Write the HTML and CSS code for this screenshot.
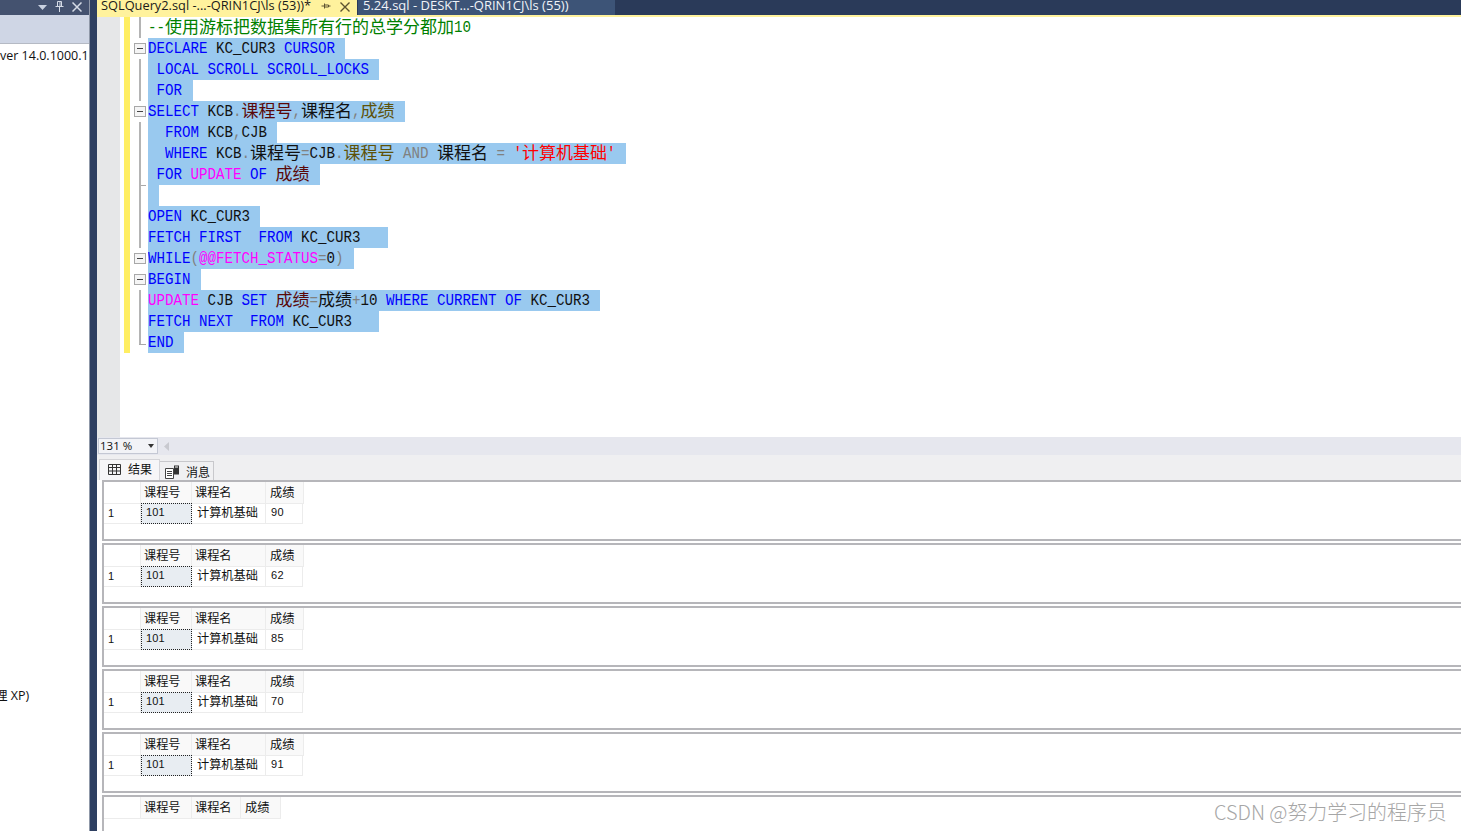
FILE: index.html
```html
<!DOCTYPE html>
<html lang="zh">
<head>
<meta charset="utf-8">
<title>SQLQuery2.sql</title>
<link rel="stylesheet" href="styles.css">
</head>
<body>
<div class="app">
  <aside class="side">
    <div class="side-bar">
      <svg class="ic-tri" width="9" height="5" viewBox="0 0 9 5"><path d="M0 0h9L4.500 5z" fill="#c9d1e0"/></svg>
      <svg class="ic-pin" width="9" height="11" viewBox="0 0 9 11"><path d="M2.500 .5h4v5h-4zM5 1v4.500M.5 5.500h8M4.500 6v5" fill="none" stroke="#d5dbe6"/></svg>
      <svg class="ic-x" width="10" height="10" viewBox="0 0 10 10"><path d="M.5.500l9 9M9.500.5l-9 9" stroke="#d5dbe6" stroke-width="1.500"/></svg>
    </div>
    <div class="side-head"></div>
    <div class="side-body">
      <div class="side-ver">ver 14.0.1000.169</div>
      <div class="side-xp">理 XP)</div>
    </div>
  </aside>
  <div class="split"></div>
  <main class="main">
    <div class="tabs">
      <div class="tab tab-on">
        <span class="tab-name">SQLQuery2.sql -...-QRIN1CJ\ls (53))*</span>
        <svg class="tab-pin" width="10" height="9" viewBox="0 0 10 9"><path d="M3.500 1.500v5M3.500 3h4v2h-4M7.500 4h2M.5 4h3" fill="none" stroke="#5c5330"/></svg>
        <svg class="tab-x" width="10" height="10" viewBox="0 0 10 10"><path d="M.5.500l9 9M9.500.5l-9 9" stroke="#5c5330" stroke-width="1.400"/></svg>
      </div>
      <div class="tab tab-off"><span class="tab-name">5.24.sql - DESKT...-QRIN1CJ\ls (55))</span></div>
    </div>
    <div class="tab-rule"></div>
    <section class="editor">
      <div class="row"><div class="gut"><i class="fold"></i></div><div class="code plain cm"><span class="t">--</span><span class="c">使用游标把数据集所有行的总学分都加</span><span class="t">10</span></div></div>
      <div class="row"><div class="gut"><i class="box"></i></div><div class="code"><span class="t kw">DECLARE</span> <span class="t">KC_CUR3</span> <span class="t kw">CURSOR</span></div></div>
      <div class="row"><div class="gut"><i class="fold"></i></div><div class="code"> <span class="t kw">LOCAL</span> <span class="t kw">SCROLL</span> <span class="t kw">SCROLL_LOCKS</span></div></div>
      <div class="row"><div class="gut"><i class="fold"></i></div><div class="code"> <span class="t kw">FOR</span></div></div>
      <div class="row"><div class="gut"><i class="box"></i></div><div class="code"><span class="t kw">SELECT</span> <span class="t">KCB</span><span class="t op">.</span><span class="c dr">课程号</span><span class="t op">,</span><span class="c">课程名</span><span class="t op">,</span><span class="c ol">成绩</span></div></div>
      <div class="row"><div class="gut"><i class="fold"></i></div><div class="code">  <span class="t kw">FROM</span> <span class="t">KCB</span><span class="t op">,</span><span class="t">CJB</span></div></div>
      <div class="row"><div class="gut"><i class="fold"></i></div><div class="code">  <span class="t kw">WHERE</span> <span class="t">KCB</span><span class="t op">.</span><span class="c">课程号</span><span class="t op">=</span><span class="t">CJB</span><span class="t op">.</span><span class="c ol">课程号</span> <span class="t op">AND</span> <span class="c">课程名</span> <span class="t op">=</span> <span class="t str">'</span><span class="c str">计算机基础</span><span class="t str">'</span></div></div>
      <div class="row"><div class="gut"><i class="fold fold-end"></i></div><div class="code"> <span class="t kw">FOR</span> <span class="t fn">UPDATE</span> <span class="t kw">OF</span> <span class="c dr">成绩</span></div></div>
      <div class="row"><div class="gut"><i class="fold"></i></div><div class="code"></div></div>
      <div class="row"><div class="gut"><i class="fold"></i></div><div class="code"><span class="t kw">OPEN</span> <span class="t">KC_CUR3</span></div></div>
      <div class="row"><div class="gut"><i class="fold"></i></div><div class="code"><span class="t kw">FETCH</span> <span class="t kw">FIRST</span>  <span class="t kw">FROM</span> <span class="t">KC_CUR3</span>  </div></div>
      <div class="row"><div class="gut"><i class="box"></i></div><div class="code"><span class="t kw">WHILE</span><span class="t op">(</span><span class="t fn">@@FETCH_STATUS</span><span class="t op">=</span><span class="t">0</span><span class="t op">)</span></div></div>
      <div class="row"><div class="gut"><i class="box"></i></div><div class="code"><span class="t kw">BEGIN</span></div></div>
      <div class="row"><div class="gut"><i class="fold"></i></div><div class="code"><span class="t fn">UPDATE</span> <span class="t">CJB</span> <span class="t kw">SET</span> <span class="c dr">成绩</span><span class="t op">=</span><span class="c">成绩</span><span class="t op">+</span><span class="t">10</span> <span class="t kw">WHERE</span> <span class="t kw">CURRENT</span> <span class="t kw">OF</span> <span class="t">KC_CUR3</span></div></div>
      <div class="row"><div class="gut"><i class="fold"></i></div><div class="code"><span class="t kw">FETCH</span> <span class="t kw">NEXT</span>  <span class="t kw">FROM</span> <span class="t">KC_CUR3</span>  </div></div>
      <div class="row"><div class="gut"><i class="fold fold-last"></i></div><div class="code"><span class="t kw">END</span></div></div>
    </section>
    <div class="zoombar">
      <div class="zoom-box"><span>131 %</span><svg width="6" height="4" viewBox="0 0 6 4"><path d="M0 0h6L3 4z" fill="#333"/></svg></div>
      <svg class="hs-arrow" width="5" height="9" viewBox="0 0 5 9"><path d="M5 0v9L0 4.500z" fill="#c8c9cf"/></svg>
    </div>
    <div class="rtabs">
      <div class="rtab rtab-on">
        <svg width="13" height="11" viewBox="0 0 13 11"><path d="M.5.500h12v10H.5zM.5 3.500h12M.5 7h12M4.500.5v10M8.500.5v10" fill="none" stroke="#333"/></svg>
        <span>结果</span>
      </div>
      <div class="rtab rtab-off">
        <svg width="15" height="14" viewBox="0 0 15 14"><path d="M.5 3.500h8v10h-8zM2 6.500h5M2 8.500h5M2 10.500h5" fill="#fff" stroke="#444"/><path d="M9 .500h5v9H9z" fill="#333"/><path d="M10 2h3" stroke="#fff"/></svg>
        <span>消息</span>
      </div>
    </div>
    <section class="results">
      <div class="panel">
        <div class="grid"><b></b><b>课程号</b><b>课程名</b><b>成绩</b></div>
        <div class="grid data"><u>1</u><em>101</em><u class="cj">计算机基础</u><u>90</u></div>
      </div>
      <div class="panel">
        <div class="grid"><b></b><b>课程号</b><b>课程名</b><b>成绩</b></div>
        <div class="grid data"><u>1</u><em>101</em><u class="cj">计算机基础</u><u>62</u></div>
      </div>
      <div class="panel">
        <div class="grid"><b></b><b>课程号</b><b>课程名</b><b>成绩</b></div>
        <div class="grid data"><u>1</u><em>101</em><u class="cj">计算机基础</u><u>85</u></div>
      </div>
      <div class="panel">
        <div class="grid"><b></b><b>课程号</b><b>课程名</b><b>成绩</b></div>
        <div class="grid data"><u>1</u><em>101</em><u class="cj">计算机基础</u><u>70</u></div>
      </div>
      <div class="panel">
        <div class="grid"><b></b><b>课程号</b><b>课程名</b><b>成绩</b></div>
        <div class="grid data"><u>1</u><em>101</em><u class="cj">计算机基础</u><u>91</u></div>
      </div>
      <div class="panel panel-last">
        <div class="grid grid-narrow"><b></b><b>课程号</b><b>课程名</b><b>成绩</b></div>
      </div>
    </section>
  </main>
</div>
<div class="mark">CSDN @努力学习的程序员</div>
</body>
</html>
```
FILE: styles.css
```css
* { box-sizing: border-box; }
html, body { margin: 0; height: 831px; overflow: hidden; background: #fff; }
body { position: relative; font-family: "Open Sans", "Noto Sans CJK SC", sans-serif; }
.app { display: flex; width: 1461px; height: 831px; }

/* left panel */
.side { width: 90px; flex: none; display: flex; flex-direction: column; overflow: hidden; border-right: 1px solid #8f98a8; }
.side-bar { height: 15px; background: #44526f; display: flex; align-items: center; flex: none; padding-left: 38px; }
.ic-tri { margin-right: 8px; }
.ic-pin { margin-right: 8px; margin-top: -3px; }
.ic-x { margin-top: -2px; }
.side-head { height: 29px; background: #cfd6e5; flex: none; border-bottom: 1px solid #b5bac4; }
.side-body { flex: 1; background: #fff; font-size: 12.5px; color: #111; }
.side-ver { white-space: nowrap; padding-top: 3px; line-height: 17px; }
.side-xp { white-space: nowrap; margin-top: 623px; margin-left: -5px; line-height: 17px; }

.split { width: 7px; flex: none; background: #2e3f61; }

/* main column */
.main { flex: 1; min-width: 0; display: flex; flex-direction: column; background: #fff; }
.tabs { height: 15px; flex: none; background: #2a3a59; display: flex; overflow: hidden; }
.tab { font-size: 12.8px; line-height: 11px; white-space: pre; display: flex; align-items: flex-start; overflow: hidden; }
.tab-on { width: 260px; background: #fff29d; color: #1a1a1a; padding-left: 4px; margin-right: 1px; }
.tab-off { width: 257px; background: #3d5477; color: #f0f3f8; padding-left: 5px; font-size: 13px; }
.tab-pin { margin-left: 10px; margin-top: 2px; flex: none; }
.tab-x { margin-left: 9px; margin-top: 2px; flex: none; }
.tab-rule { height: 2px; background: #fff29d; flex: none; }

/* editor */
.editor {
  height: 420px; flex: none; overflow: hidden;
  background: linear-gradient(90deg, #e6e7e8 0, #e6e7e8 23px, #fff 23px);
}
.row { display: flex; height: 21px; }
.gut {
  width: 51px; flex: none; position: relative;
  background: linear-gradient(90deg, transparent 27px, #ffee62 27px, #ffee62 33px, transparent 33px);
}
.gut i { position: absolute; display: block; }
.fold { left: 42px; top: 0; bottom: 0; width: 2px; background: #b4b4b4; }
.fold-end::after { content: ""; position: absolute; left: 0; bottom: -1px; width: 7px; height: 1px; background: #a8a8a8; }
.fold-last { bottom: 8px; }
.fold-last::after { content: ""; position: absolute; left: 0; bottom: 0; width: 7px; height: 1px; background: #a8a8a8; }
.box { left: 37px; top: 5px; width: 12px; height: 11px; border: 1px solid #a8a8a8; background: #f5f5f5; }
.box::after { content: ""; position: absolute; left: 2px; top: 4px; width: 6px; height: 1px; background: #444; }
.code {
  height: 21px; width: fit-content; min-width: 10px; padding-right: 10.5px;
  background: #99c9ef; white-space: pre;
  font: 14.17px/21px "Liberation Mono", "Noto Sans CJK SC", monospace;
  color: #111;
}
.code.plain { background: transparent; padding-right: 0; }
.cm { color: #008000; }
.t { display: inline-block; transform: scaleY(1.22); }
.c { font: 17px/18px "Noto Sans CJK SC", sans-serif; vertical-align: top; }
.kw { color: #0000ff; }
.fn { color: #ff00ff; }
.op { color: #808080; }
.str { color: #ff0000; }
.dr { color: #5a0808; }
.ol { color: #5e5208; }

/* zoom bar */
.zoombar { height: 18px; flex: none; background: #e6e7ee; display: flex; align-items: center; padding-left: 1px; }
.zoom-box { width: 60px; height: 16px; background: #f2f3f7; border: 1px solid #c4c8d4; font-size: 11.5px; line-height: 14px; display: flex; align-items: center; justify-content: space-between; padding: 0 3px 0 1px; color: #111; }
.hs-arrow { margin-left: 6px; }

/* result tabs */
.rtabs { height: 25px; flex: none; background: #efeff1; display: flex; align-items: flex-end; padding-left: 2px; }
.rtab { display: flex; align-items: center; font: 12px/16px "Noto Sans CJK SC", sans-serif; color: #111; }
.rtab-on { height: 21px; width: 61px; background: #f6f6f8; border: 1px solid #d4d4d8; border-bottom: 0; padding: 0 0 2px 8px; gap: 7px; }
.rtab-off { height: 19px; width: 54px; background: #f0f0f2; border: 1px solid #c8c8cc; border-left: 0; border-bottom: 0; padding: 1px 0 0 5px; gap: 6px; }

/* results */
.results { flex: 1; min-height: 0; overflow: hidden; padding-left: 5px; }
.panel { height: 61px; margin-bottom: 2px; background: #fff; border: solid #b6b6ba; border-width: 2px 0 2px 2px; }
.panel-last { height: 60px; margin-bottom: 0; }
.grid { display: grid; grid-template-columns: 37px 51px 74px 38px; width: fit-content; height: 21px; }
.grid-narrow { grid-template-columns: 37px 51px 49px 40px; }
.grid b { font: 12.2px/21px "Noto Sans CJK SC", sans-serif; padding-left: 3px; color: #111; background: #f9f9f9; border-right: 1px solid #ececec; border-bottom: 1px solid #ececec; white-space: nowrap; }
.grid b:first-child { background: #fff; }
.grid b:last-child { padding-left: 4px; }
.data { height: 21px; grid-template-columns: 37px 51px 74px 37px; }
.data u { text-decoration: none; font: 11px/19px "Liberation Sans", "Noto Sans CJK SC", sans-serif; letter-spacing: .3px; color: #111; padding-left: 5px; border-right: 1px solid #ececec; border-bottom: 1px solid #ececec; }
.data u:first-child { padding-left: 4px; line-height: 20px; }
.data em { font: normal 11px/17px "Liberation Sans", sans-serif; letter-spacing: .1px; color: #111; padding-left: 4px; background: #e8edf2; border: 1px dotted #222; }
.data .cj { font: 12.2px/18px "Noto Sans CJK SC", sans-serif; letter-spacing: 0; white-space: nowrap; }

.mark { position: absolute; left: 1214px; top: 799px; font: 19.9px/26px "Noto Sans CJK SC", sans-serif; font-weight: 300; color: #a6a6a6; white-space: nowrap; }
```
